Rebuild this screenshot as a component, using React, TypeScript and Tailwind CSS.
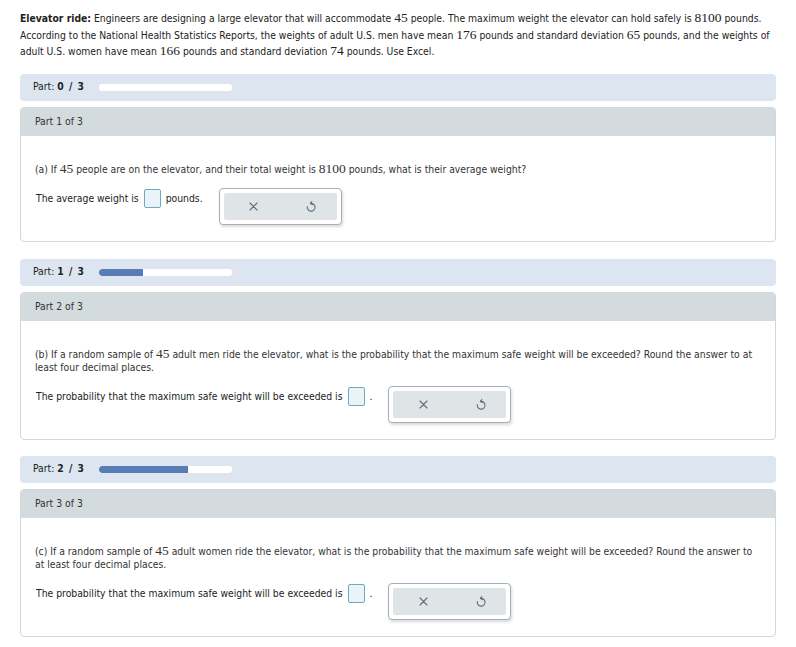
import React from "react";

const N = ({ children }: { children: React.ReactNode }) => (
  <span className="font-['Liberation_Serif',serif] text-[13.5px] leading-[0] tracking-normal">{children}</span>
);

const XIcon = () => (
  <svg width="9" height="9" viewBox="0 0 9 9" fill="none">
    <path d="M1 1L8 8M8 1L1 8" stroke="#5d6e79" strokeWidth="1.1" strokeLinecap="round" />
  </svg>
);

const UndoIcon = () => (
  <svg width="10" height="12" viewBox="0 0 10 12" fill="none">
    <path d="M4.6 3.4A3.9 3.9 0 1 1 1.3 6.6" stroke="#5d6e79" strokeWidth="1.1" strokeLinecap="round" fill="none" />
    <path d="M5.8 1.6L4.4 3.4L6.2 4.6" stroke="#5d6e79" strokeWidth="1.1" strokeLinecap="round" strokeLinejoin="round" fill="none" />
  </svg>
);

const ButtonGroup = () => (
  <div className="ml-[16px] w-[123px] h-[37px] rounded-[4px] border border-[#a4afb6] bg-white p-[4px] shadow-[1px_2px_3px_rgba(0,0,0,0.15)]">
    <div className="h-full w-full rounded-[2px] bg-[#dfe4e7] flex items-center">
      <div className="w-[58px] flex justify-center pl-[4px]">
        <XIcon />
      </div>
      <div className="w-[58px] flex justify-center pl-[6px]">
        <UndoIcon />
      </div>
    </div>
  </div>
);

const Input = () => (
  <span className="inline-block w-[17px] h-[19px] mx-[5px] rounded-[2px] border border-[#6fa9bb] bg-[#e9f4f9]" />
);

const PartBar = ({ n, fill }: { n: number; fill: string }) => (
  <div className="h-[27px] rounded-[4px] bg-[#dde6f0] flex items-center pl-[13px]">
    <div className="w-[66px] text-[#222]">
      Part: <span className="font-bold">{n}<span className="mx-[2px]"> / </span>3</span>
    </div>
    <div className="w-[133px] h-[7px] rounded-[3px] bg-white overflow-hidden">
      <div className={`h-full bg-[#587cb5] rounded-l-[3px] ${fill}`} />
    </div>
  </div>
);

const Panel = ({
  title,
  question,
  answer,
}: {
  title: string;
  question: React.ReactNode;
  answer: React.ReactNode;
}) => (
  <div className="mt-[6.5px] rounded-[4px] border border-[#d0d8dc] overflow-hidden">
    <div className="h-[28px] bg-[#d4dbde] flex items-center pl-[14px] text-[#333]">{title}</div>
    <div className="px-[14px] pt-[26.5px] pb-[16px]">
      <div className="leading-[13px] text-[#333]">{question}</div>
      <div className="mt-[12px] flex items-start">
        <div className="flex items-center h-[22px] pl-[1px] text-[#222]">{answer}</div>
        <ButtonGroup />
      </div>
    </div>
  </div>
);

export default function App() {
  return (
    <div className="w-[796px] h-[647px] bg-white font-['DejaVu_Sans_Condensed','DejaVu_Sans',sans-serif] text-[10.3px] text-[#222] overflow-hidden">
      <div className="px-[20px] pt-[10px] leading-[16.5px] whitespace-nowrap">
        <span className="font-bold">Elevator ride:</span> Engineers are designing a large elevator that will accommodate <N>45</N> people. The maximum weight the elevator can hold safely is <N>8100</N> pounds.
        <br />
        According to the National Health Statistics Reports, the weights of adult U.S. men have mean <N>176</N> pounds and standard deviation <N>65</N> pounds, and the weights of
        <br />
        adult U.S. women have mean <N>166</N> pounds and standard deviation <N>74</N> pounds. Use Excel.
      </div>
      <div className="mx-[20px] mt-[14px]">
        <PartBar n={0} fill="w-0" />
        <Panel
          title="Part 1 of 3"
          question={
            <>
              (a) If <N>45</N> people are on the elevator, and their total weight is <N>8100</N> pounds, what is their average weight?
            </>
          }
          answer={
            <>
              The average weight is <Input /> pounds.
            </>
          }
        />
        <div className="mt-[17px]">
          <PartBar n={1} fill="w-[44px]" />
        </div>
        <Panel
          title="Part 2 of 3"
          question={
            <>
              (b) If a random sample of <N>45</N> adult men ride the elevator, what is the probability that the maximum safe weight will be exceeded? Round the answer to at
              <br />
              least four decimal places.
            </>
          }
          answer={
            <>
              The probability that the maximum safe weight will be exceeded is <Input />.
            </>
          }
        />
        <div className="mt-[16px]">
          <PartBar n={2} fill="w-[89px]" />
        </div>
        <Panel
          title="Part 3 of 3"
          question={
            <>
              (c) If a random sample of <N>45</N> adult women ride the elevator, what is the probability that the maximum safe weight will be exceeded? Round the answer to
              <br />
              at least four decimal places.
            </>
          }
          answer={
            <>
              The probability that the maximum safe weight will be exceeded is <Input />.
            </>
          }
        />
      </div>
    </div>
  );
}
